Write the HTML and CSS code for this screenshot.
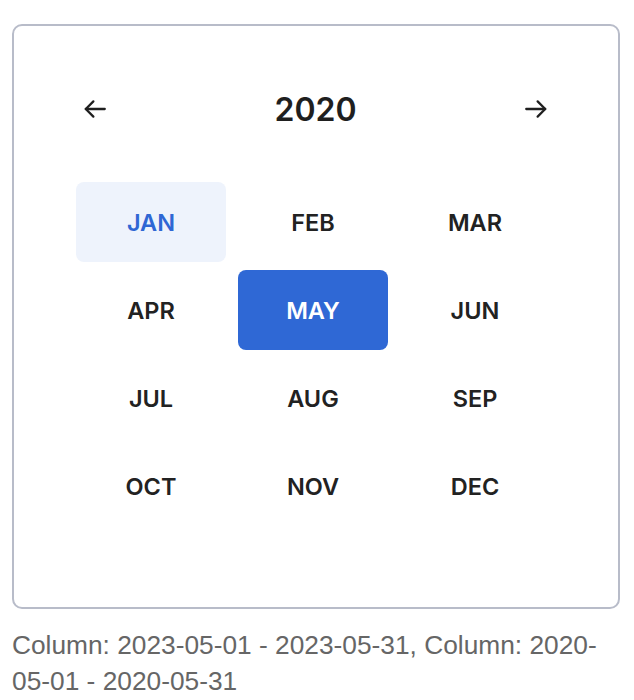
FILE: index.html
```html
<!DOCTYPE html>
<html>
<head>
<meta charset="utf-8">
<link rel="stylesheet" href="styles.css">
</head>
<body>
<div class="page">
  <div class="card">
    <div class="header">
      <button class="nav" aria-label="Previous year">
        <svg width="26" height="26" viewBox="0 0 24 24" fill="none" stroke="#1f1f1f" stroke-width="2.1" stroke-linecap="round" stroke-linejoin="round"><path d="M21 12H3.5"/><path d="M10.5 5l-7 7 7 7"/></svg>
      </button>
      <div class="year">2020</div>
      <button class="nav" aria-label="Next year">
        <svg width="26" height="26" viewBox="0 0 24 24" fill="none" stroke="#1f1f1f" stroke-width="2.1" stroke-linecap="round" stroke-linejoin="round"><path d="M3 12h17.5"/><path d="M13.5 5l7 7-7 7"/></svg>
      </button>
    </div>
    <div class="grid">
      <div class="month current">JAN</div>
      <div class="month">FEB</div>
      <div class="month">MAR</div>
      <div class="month">APR</div>
      <div class="month selected">MAY</div>
      <div class="month">JUN</div>
      <div class="month">JUL</div>
      <div class="month">AUG</div>
      <div class="month">SEP</div>
      <div class="month">OCT</div>
      <div class="month">NOV</div>
      <div class="month">DEC</div>
    </div>
  </div>
  <p class="summary">Column: 2023-05-01 - 2023-05-31, Column: 2020-05-01 - 2020-05-31</p>
</div>
</body>
</html>
```
FILE: styles.css
```css
html, body {
  margin: 0;
  padding: 0;
  background: #ffffff;
}
.page {
  padding: 24px 14px 0 12px;
}
.card {
  border: 2px solid #b8bcc9;
  border-radius: 10px;
  padding: 61px 62px 81px 62px;
  width: 608px;
  box-sizing: border-box;
}
.header {
  display: flex;
  align-items: center;
  justify-content: space-between;
  height: 44px;
  margin: 0 0 51px -1px;
}
.nav {
  background: none;
  border: 0;
  padding: 0;
  width: 40px;
  height: 40px;
  display: flex;
  align-items: center;
  justify-content: center;
  cursor: pointer;
}
.year {
  font-family: Inter, "Noto Sans", sans-serif;
  font-weight: 600;
  font-size: 32px;
  color: #1f1f1f;
}
.grid {
  display: grid;
  grid-template-columns: repeat(3, 150px);
  grid-auto-rows: 80px;
  column-gap: 12px;
  row-gap: 8px;
}
.month {
  display: flex;
  align-items: center;
  justify-content: center;
  border-radius: 8px;
  font-family: Inter, "Liberation Sans", sans-serif;
  font-weight: 600;
  font-size: 23.5px;
  color: #222222;
}
.month.current {
  background: #eef3fc;
  color: #2f67d4;
}
.month.selected {
  background: #2f68d5;
  color: #ffffff;
}
.summary {
  margin: 18px 0 0 0;
  width: 608px;
  font-family: "Liberation Sans", Arial, sans-serif;
  font-size: 26.3px;
  line-height: 36px;
  color: #666666;
}
```
